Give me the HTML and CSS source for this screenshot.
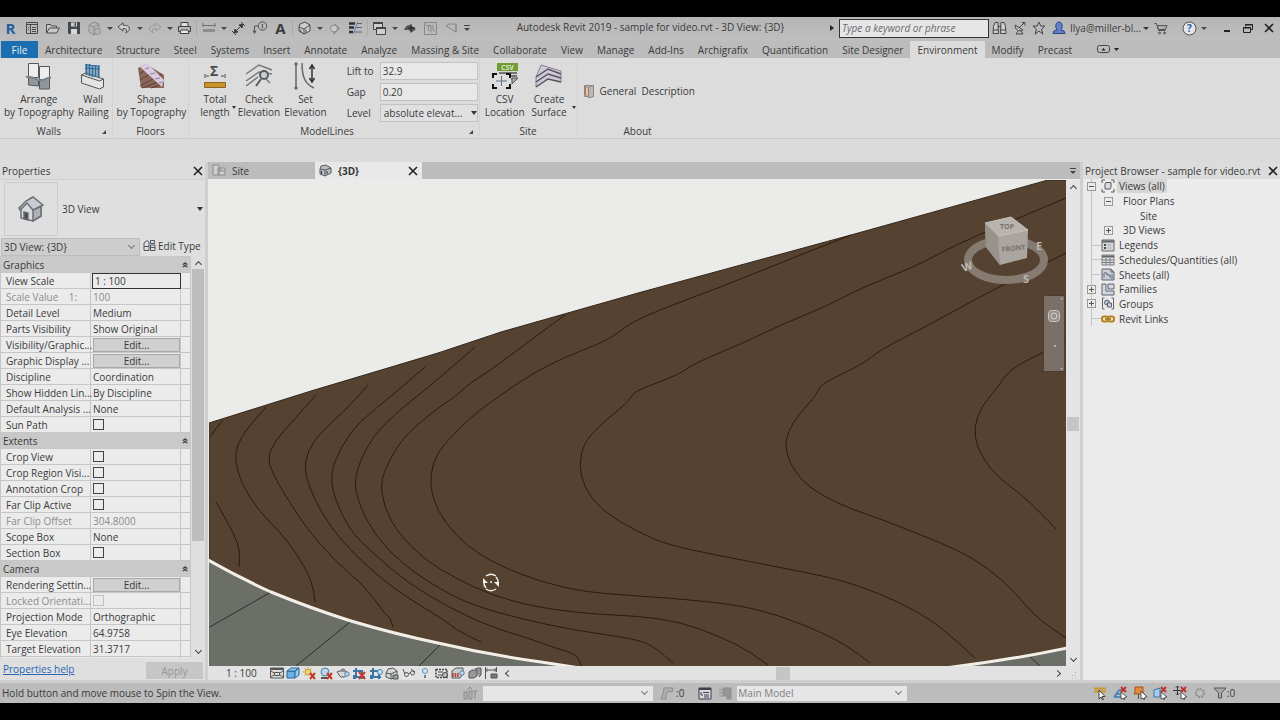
FILE: index.html
```html
<!DOCTYPE html>
<html lang="en">
<head>
  <meta charset="UTF-8" />
  <meta name="viewport" content="width=device-width, initial-scale=1.0"/>
  <title>Autodesk Revit 2019 - sample for video.rvt - 3D View: {3D}</title>
  <link rel="stylesheet" href="styles.css">
</head>
<body>
  <div class="app">

    <header class="titlebar">
      <div class="quick-access">
        <button class="qa logo-r" aria-label="Revit">R</button>
        <button class="qa" aria-label="Home"><svg width="14" height="14" viewBox="0 0 14 14" fill="none" stroke="#4a4a4a"><path d="M1.500 1.500h11v11h-11zM1.500 3.500h11M5.500 4v8M7 6.500h4M7 8.500h4M7 10.500h4M3 6.500h1M3 8.500h1"/></svg></button>
        <button class="qa" aria-label="Open"><svg width="15" height="14" viewBox="0 0 15 14" fill="#c9c9c9" stroke="#4a4a4a"><path d="M1.500 12V3.500h4l1 1.500h5v2"/><path d="M1.500 12l3-5h10l-3 5z"/></svg></button>
        <button class="qa" aria-label="Save"><svg width="14" height="14" viewBox="0 0 14 14"><path d="M1 1h12v12H2l-1-1z" fill="#45484c"/><path d="M4 1.500h6v4H4z" fill="#d0d0d0"/><path d="M4 8h6v5H4z" fill="#d8d8d8"/><path d="M7.500 2h1.500v3H7.500z" fill="#45484c"/></svg></button>
        <button class="qa" aria-label="Synchronize"><svg width="15" height="15" viewBox="0 0 15 15" fill="#b4b4b4" stroke="#8e8e8e"><path d="M2 4l5-3 5 2v7l-5 4-5-3z"/><path d="M2 4l5 2 5-3M7 6v8" fill="none"/><circle cx="10.500" cy="10.500" r="3"/></svg></button>
        <button class="qa-drop" aria-label="Synchronize options"></button>
        <button class="qa" aria-label="Undo"><svg width="15" height="12" viewBox="0 0 15 12" fill="#d2d2d2" stroke="#4a4a4a"><path d="M6 .8L1 5l5 4V6.500c4-.5 4 1.500 3 4.500 5-3 5-8-3-7.800z"/></svg></button>
        <button class="qa-drop" aria-label="Undo history"></button>
        <button class="qa" aria-label="Redo"><svg width="15" height="12" viewBox="0 0 15 12" fill="none" stroke="#979797"><path d="M9 .8L14 5 9 9V6.500c-4-.5-4 1.500-3 4.500-5-3-5-8 3-7.800z"/></svg></button>
        <button class="qa-drop" aria-label="Redo history"></button>
        <button class="qa" aria-label="Print"><svg width="15" height="14" viewBox="0 0 15 14" stroke="#3f3f3f"><path d="M4 6V1.500h7V6" fill="#e0e0e0"/><path d="M1.500 5.500h12v5h-12z" fill="#b9b9b9"/><path d="M4 9h7l1 3.500H3z" fill="#e8e8e8"/></svg></button>
        <span class="qa-sep"></span>
        <button class="qa" aria-label="Measure"><svg width="14" height="12" viewBox="0 0 14 12" stroke="#707070" fill="none"><path d="M1 3.500h12M1 1v4M13 1v4"/><path d="M1 8.500h12" stroke-width="3" stroke="#8d8d8d"/></svg></button>
        <button class="qa-drop" aria-label="Measure options"></button>
        <button class="qa" aria-label="Aligned dimension"><svg width="15" height="15" viewBox="0 0 15 15" stroke="#3f3f3f" fill="#3f3f3f"><path d="M3 12L12 3M1 10l4 4M10 1l4 4" fill="none"/><path d="M3 12l1-4 3 3zM12 3l-4 1 3 3z"/></svg></button>
        <button class="qa" aria-label="Tag by category"><svg width="16" height="14" viewBox="0 0 16 14" stroke="#555" fill="none"><circle cx="10.500" cy="5" r="4.200"/><path d="M6 5H2.500v6M1 9.500l1.500 3L4 9.500M9.500 4l1-1v4.500"/></svg></button>
        <button class="qa text-tool" aria-label="Text">A</button>
        <span class="qa-sep"></span>
        <button class="qa" aria-label="Default 3D view"><svg width="15" height="14" viewBox="0 0 15 14" stroke="#4a4a4a" fill="#cdcdcd"><path d="M2 6l1-3 5-2 5 3v6l-6 3-5-3z"/><path d="M2 6l5 2 6-4M7 8v5M9 8.500v3M3.800 8.500v2.500" fill="none"/></svg></button>
        <button class="qa-drop" aria-label="3D view options"></button>
        <button class="qa" aria-label="Section"><svg width="13" height="13" viewBox="0 0 13 13" stroke="#8a8a8a"><path d="M7 2l4.500 4.500L7 11z" fill="#8a8a8a"/><circle cx="6" cy="6.500" r="3.500" fill="#c9c9c9"/><path d="M6 10v3"/></svg></button>
        <button class="qa" aria-label="Thin lines"><svg width="15" height="14" viewBox="0 0 15 14" fill="none"><path d="M1 2.500h6M1 6.500h5M1 11h4" stroke="#303030" stroke-width="2.500"/><path d="M9 2.500h5M8 6.500h6M7 11h7" stroke="#666"/><path d="M9.500 1L5.500 13" stroke="#3d8bd0"/></svg></button>
        <span class="qa-sep"></span>
        <button class="qa" aria-label="Close hidden windows"><svg width="15" height="15" viewBox="0 0 15 15" fill="#cfcfcf" stroke="#444"><path d="M1.500 1.500h9v7h-9z"/><path d="M1.500 2h9" stroke-width="2"/><path d="M4.500 6.500h9v7h-9z"/><path d="M4.500 7h9" stroke-width="2"/></svg></button>
        <button class="qa-drop" aria-label="Window options"></button>
        <button class="qa" aria-label="Orbit"><svg width="14" height="12" viewBox="0 0 14 12"><path d="M1 8c2-5 5-6 8-4l4 3-5 4-2-3z" fill="#555"/><path d="M8 2v7M5 6h7" stroke="#222"/></svg></button>
        <button class="qa" aria-label="Levels"><svg width="13" height="13" viewBox="0 0 13 13" stroke="#888" fill="none"><path d="M.5.500h12v12H.5zM2 3.500h5v7M4.500 4v5M9 3v5l2 2"/></svg></button>
        <button class="qa" aria-label="Pick plane"><svg width="13" height="13" viewBox="0 0 13 13" stroke="#888" fill="none"><path d="M1 4l3-2h7v8zM11 2v8"/></svg></button>
        <button class="qa-drop qa-more" aria-label="Customize toolbar"></button>
      </div>

      <div class="window-title">Autodesk Revit 2019 - sample for video.rvt - 3D View: {3D}</div>

      <div class="infocenter">
        <span class="play-mark"></span>
        <input class="search" type="search" placeholder="Type a keyword or phrase" aria-label="Search help">
        <button class="qa" aria-label="Search"><svg width="15" height="14" viewBox="0 0 15 14" fill="#cfcfcf" stroke="#444"><path d="M3 1.500h3v4l.5 7H1l.5-7zM9 1.500h3l1.500 4 .5 7H8.500z"/><path d="M6 5.500h3M1.500 9h5M8.500 9H14" fill="none"/></svg></button>
        <button class="qa" aria-label="Communication center"><svg width="13" height="14" viewBox="0 0 13 14" fill="none" stroke="#444"><path d="M2 4c0 5 4 7 8 5zM6 7l5-5M9 1.500h3v3M5 10l-2 3h7l-2-3"/></svg></button>
        <button class="qa" aria-label="Favorites"><svg width="14" height="14" viewBox="0 0 14 14" fill="none" stroke="#444"><path d="M7 1l1.800 4H13l-3.400 3 1.200 5L7 10l-3.800 3 1.200-5L1 5h4.200z"/></svg></button>
        <button class="qa" aria-label="Account"><svg width="14" height="14" viewBox="0 0 14 14" fill="#5f7fc6" stroke="#2b437f"><path d="M1 12.500l1-2.500 3-1C3 6 3.500 1 7 1s4 5 2 8l3 1 1 2.500z"/></svg></button>
        <button class="account">Ilya@miller-bl...<i class="caret"></i></button>
        <button class="qa cart" aria-label="App store"><svg width="14" height="13" viewBox="0 0 14 13" fill="#aaa" stroke="#555"><path d="M.5 1.500h2l2 7h7M3.500 3.500h9.500l-1.500 4H4.500z"/><circle cx="5.500" cy="11" r="1"/><circle cx="10.500" cy="11" r="1"/></svg></button>
        <button class="qa" aria-label="Help"><svg width="15" height="15" viewBox="0 0 15 15"><circle cx="7.500" cy="7.500" r="6.500" fill="#e4e6ea" stroke="#555"/><text class="help-mark" x="5" y="11">?</text></svg></button>
        <button class="qa-drop" aria-label="Help options"></button>
        <div class="window-controls">
          <button aria-label="Minimize"><svg width="10" height="10" viewBox="0 0 10 10"><path d="M2 8h6" stroke="#222" stroke-width="2"/></svg></button>
          <button aria-label="Restore"><svg width="12" height="11" viewBox="0 0 12 11" fill="none" stroke="#222"><path d="M3.500 3.500v-2h7v5h-2M1.500 4.500h7v5h-7z"/><path d="M1 5h8M3 2h8"/></svg></button>
          <button aria-label="Close"><svg width="10" height="10" viewBox="0 0 10 10"><path d="M1 1l8 8M9 1L1 9" stroke="#222" stroke-width="1.600"/></svg></button>
        </div>
      </div>
    </header>

    <nav class="ribbon-tabs">
      <div class="tabs">
        <button class="tab file">File</button>
        <button class="tab">Architecture</button>
        <button class="tab">Structure</button>
        <button class="tab">Steel</button>
        <button class="tab">Systems</button>
        <button class="tab">Insert</button>
        <button class="tab">Annotate</button>
        <button class="tab">Analyze</button>
        <button class="tab">Massing &amp; Site</button>
        <button class="tab">Collaborate</button>
        <button class="tab">View</button>
        <button class="tab">Manage</button>
        <button class="tab">Add-Ins</button>
        <button class="tab">Archigrafix</button>
        <button class="tab">Quantification</button>
        <button class="tab">Site Designer</button>
        <button class="tab active">Environment</button>
        <button class="tab">Modify</button>
        <button class="tab">Precast</button>
      </div>
      <button class="ribbon-toggle" aria-label="Minimize ribbon"><svg width="24" height="9" viewBox="0 0 24 9"><rect x=".5" y=".5" width="12" height="7" rx="2" fill="none" stroke="#444"/><path d="M4.500 5.500l2-2.500 2 2.500zM17 3h5l-2.500 3z" fill="#222"/></svg></button>
    </nav>

    <section class="ribbon">
      <div class="panel walls">
        <div class="panel-body">
          <button class="tool">
            <svg width="28" height="28" viewBox="0 0 28 28" stroke="#55585c"><path d="M3.500 1.500h10v14h-10zM14.500 4.500h10v13h-10z" fill="#ededed"/><path d="M3.500 15l8 2 2 1v6l-10-1zM14.500 19c4-1 6-3 10-3v11h-10z" fill="#8e979d"/><path d="M1 15c8-2 10 5 17 3 4-1 5-3 8-2" fill="none" stroke="#7b858b" stroke-width="2"/></svg>
            <span>Arrange<br>by Topography</span>
          </button>
          <button class="tool">
            <svg width="28" height="28" viewBox="0 0 28 28" fill="none"><path d="M2.500 13l18 6 4-2v8l-4 2-18-6z" fill="#e4e4e4" stroke="#555"/><path d="M2.500 13l4-2 18 6" stroke="#555"/><path d="M7.500 2v11M10.500 2v12M13.500 3v12M16.500 3v12M19.500 4v12" stroke="#2f6d99" stroke-width="2"/><path d="M6 3l15 1M6 6l15 1" stroke="#2f6d99"/></svg>
            <span>Wall<br>Railing</span>
          </button>
        </div>
        <div class="panel-title"><span>Walls</span><button class="launcher" aria-label="Walls settings"></button></div>
      </div>

      <div class="panel">
        <div class="panel-body">
          <button class="tool">
            <svg width="28" height="28" viewBox="0 0 28 28"><path d="M1 6l8-4 18 11v13H4z" fill="#8a655a"/><path d="M3 24l22-12M3 18l14-8M5 26l22-8M14 26l13-4M2 12l10-6" stroke="#5d4038" fill="none"/><path d="M3 5l7-4 17 17-2 7z" fill="#d9cbe0"/><path d="M8 7l4-1M13 12l5-1M18 17l5-1M22 21l4-1" stroke="#8d7b96"/></svg>
            <span>Shape<br>by Topography</span>
          </button>
        </div>
        <div class="panel-title"><span>Floors</span></div>
      </div>

      <div class="panel model-lines">
        <div class="panel-body">
          <button class="tool">
            <svg width="28" height="28" viewBox="0 0 28 28"><text class="sigma" x="9" y="14">Σ</text><path d="M4 12v4M24 12v4M5 14h3M20 14h3" stroke="#4a4a4a"/><path d="M3.500 20.500h21v5h-21z" fill="#c8922c" stroke="#8f6718"/></svg>
            <span>Total<br>length</span>
          </button>
          <i class="caret tool-caret"></i>
          <button class="tool">
            <svg width="28" height="28" viewBox="0 0 28 28" fill="none" stroke="#75787b" stroke-width="1.500"><path d="M1 12L14 3l13 5M1 19l13-9 13 2M1 24l12-9"/><circle cx="19" cy="13" r="4" fill="#c9ced2" stroke="#585c60" stroke-width="2"/><path d="M16 17l-5 7" stroke="#585c60" stroke-width="2"/><path d="M21 17l4 4"/></svg>
            <span>Check<br>Elevation</span>
          </button>
          <button class="tool">
            <svg width="28" height="28" viewBox="0 0 28 28" fill="none" stroke="#65686b" stroke-width="1.500"><path d="M5 1v25M11 1c0 14 3 21 12 25"/><path d="M21 4v15" stroke="#333"/><path d="M18.500 7L21 3l2.500 4M18.500 16l2.500 4 2.500-4" stroke="#333"/><circle cx="5" cy="2" r="1"/><circle cx="5" cy="26" r="1"/></svg>
            <span>Set<br>Elevation</span>
          </button>
          <div class="fields">
            <label for="lift">Lift to</label>
            <input id="lift" type="text" value="32.9">
            <label for="gap">Gap</label>
            <input id="gap" type="text" value="0.20">
            <label for="level">Level</label>
            <div class="select">
              <select id="level"><option>absolute elevat...</option></select>
              <i class="caret"></i>
            </div>
          </div>
        </div>
        <div class="panel-title"><span>ModelLines</span><button class="launcher" aria-label="ModelLines settings"></button></div>
      </div>

      <div class="panel site">
        <div class="panel-body">
          <button class="tool">
            <svg width="28" height="28" viewBox="0 0 28 28" fill="none"><path d="M7 7h20v10l-6 6H7z" fill="#d7d7d7"/><path d="M6 1h21v8H6z" fill="#6f9c35"/><text class="csv-label" x="10" y="8">CSV</text><path d="M8 11h18M18 14h8M20 17h5" stroke="#555" stroke-width="1.500"/><path d="M27 16l-6 6v-6z" fill="#aaa" stroke="#555"/><path d="M1 13h19v13H1z" fill="#dedede"/><path d="M2 16v-4h4M15 12h4v4M2 22v4h4M15 26h4v-4" stroke="#111" stroke-width="2"/><path d="M5 19h11M10.500 14v10" stroke="#5f7188"/></svg>
            <span>CSV<br>Location</span>
          </button>
          <button class="tool">
            <svg width="28" height="28" viewBox="0 0 28 28" fill="none"><path d="M1 25V15L6 3l20 6v11l-13-3z" fill="#cfc8d8"/><path d="M1 25V15L6 3l20 6v11" stroke="#8d7f9d"/><path d="M1 15l12-8 13 5M1 20l12-8 13 4M1 25l12-8 13 3" stroke="#55525c" stroke-width="1.500"/></svg>
            <span>Create<br>Surface</span>
          </button>
          <i class="caret tool-caret"></i>
        </div>
        <div class="panel-title"><span>Site</span></div>
      </div>

      <div class="panel about">
        <div class="panel-body">
          <button class="inline-tool">
            <svg width="11" height="14" viewBox="0 0 11 14" fill="#dadada" stroke="#888"><path d="M.5 1.500h9v11h-9z"/><path d="M4.500 3l5-1.500v11L4.500 14z" fill="#b9b9b9"/><path d="M1.500 2v9l3 2V4z" fill="#e6c4bb" stroke="#b0705c"/></svg>
            <span>General&nbsp; Description</span>
          </button>
        </div>
        <div class="panel-title"><span>About</span></div>
      </div>
    </section>

    <main class="workspace">
      <aside class="properties">
        <div class="pane-head"><h2>Properties</h2><button class="close" aria-label="Close properties"><svg width="10" height="10" viewBox="0 0 10 10"><path d="M1 1l8 8M9 1L1 9" stroke="#222" stroke-width="1.600"/></svg></button></div>
        <div class="type-box">
          <div class="thumb"><svg width="28" height="28" viewBox="0 0 28 28" stroke="#6c7076" stroke-width="1.500"><path d="M4 14v9l12 3 8-5v-10L14 3z" fill="#d9dadc"/><path d="M16 15l8-4v10l-8 5z" fill="#aeb2b8"/><path d="M2 13L9 6l7-4 10 8-10 5-6-7-7 7z" fill="#c9ccd1"/><path d="M7 24v-7l4 1v7z" fill="#44484e"/></svg></div>
          <span>3D View</span>
          <i class="caret"></i>
        </div>
        <div class="filter-row">
          <div class="select">
            <select aria-label="Instance"><option>3D View: {3D}</option></select>
            <i class="chevron"></i>
          </div>
          <button class="edit-type"><svg width="13" height="13" viewBox="0 0 13 13" fill="none" stroke="#50565e"><path d="M1 4l3-2.500L6 3v8.500H1zM1 7.500h5M7.500 1.500h4v3h-4zM7.500 6h4.500v5.500H7.500zM8 8.500h4"/></svg>Edit Type</button>
        </div>
        <div class="props">
          <div class="props-clip">
            <table>
              <colgroup><col><col class="col-value"><col class="col-link"></colgroup>
              <tbody>
                <tr class="group"><th colspan="3">Graphics<i>»</i></th></tr>
                <tr><th>View Scale</th><td><input class="boxed" type="text" value="1 : 100" aria-label="View Scale"></td><td></td></tr>
                <tr class="off"><th>Scale Value&nbsp; &nbsp; 1:</th><td>100</td><td></td></tr>
                <tr><th>Detail Level</th><td>Medium</td><td></td></tr>
                <tr><th>Parts Visibility</th><td>Show Original</td><td></td></tr>
                <tr><th>Visibility/Graphic...</th><td><button>Edit...</button></td><td></td></tr>
                <tr><th>Graphic Display ...</th><td><button>Edit...</button></td><td></td></tr>
                <tr><th>Discipline</th><td>Coordination</td><td></td></tr>
                <tr><th>Show Hidden Lin...</th><td>By Discipline</td><td></td></tr>
                <tr><th>Default Analysis ...</th><td>None</td><td></td></tr>
                <tr><th><label for="sun">Sun Path</label></th><td><input id="sun" type="checkbox"></td><td></td></tr>
                <tr class="group"><th colspan="3">Extents<i>»</i></th></tr>
                <tr><th><label for="crop">Crop View</label></th><td><input id="crop" type="checkbox"></td><td></td></tr>
                <tr><th><label for="region">Crop Region Visi...</label></th><td><input id="region" type="checkbox"></td><td></td></tr>
                <tr><th><label for="annot">Annotation Crop</label></th><td><input id="annot" type="checkbox"></td><td></td></tr>
                <tr><th><label for="far">Far Clip Active</label></th><td><input id="far" type="checkbox"></td><td></td></tr>
                <tr class="off"><th>Far Clip Offset</th><td>304.8000</td><td></td></tr>
                <tr><th>Scope Box</th><td>None</td><td></td></tr>
                <tr><th><label for="section">Section Box</label></th><td><input id="section" type="checkbox"></td><td></td></tr>
                <tr class="group"><th colspan="3">Camera<i>»</i></th></tr>
                <tr><th>Rendering Settin...</th><td><button>Edit...</button></td><td></td></tr>
                <tr class="off"><th><label for="locked">Locked Orientati...</label></th><td><input id="locked" type="checkbox" disabled></td><td></td></tr>
                <tr><th>Projection Mode</th><td>Orthographic</td><td></td></tr>
                <tr><th>Eye Elevation</th><td>64.9758</td><td></td></tr>
                <tr><th>Target Elevation</th><td>31.3717</td><td></td></tr>
                <tr><th></th><td></td><td></td></tr>
              </tbody>
            </table>
          </div>
          <div class="vscroll">
            <i class="chevron up"></i>
            <div class="thumb-v"></div>
            <i class="chevron"></i>
          </div>
        </div>
        <div class="props-foot"><a href="#help">Properties help</a><button disabled>Apply</button></div>
      </aside>

      <section class="view">
        <div class="view-tabs">
          <button class="view-tab"><svg width="14" height="13" viewBox="0 0 14 13" fill="#cfcfcf" stroke="#8b8b8b"><path d="M1 1h6v10H1zM6 4h7v7H6zM8 4v3h5"/></svg><span>Site</span></button>
          <button class="view-tab active"><svg width="13" height="13" viewBox="0 0 13 13" fill="#b9bec5" stroke="#565b62"><path d="M1 5l1-3 5-1 5 3v5l-6 3-5-2z"/><path d="M1 5l5 1 6-2M6 6v6" fill="none"/><path d="M2.500 7v3M8 7v3" stroke="#333"/></svg><span>{3D}</span><svg class="tab-close" width="10" height="10" viewBox="0 0 10 10"><path d="M1 1l8 8M9 1L1 9" stroke="#222" stroke-width="1.600"/></svg></button>
          <button class="tab-list qa-more" aria-label="Open views"></button>
        </div>
        <div class="view-body">
          <svg class="canvas" viewBox="209 180 857 486" preserveAspectRatio="xMidYMid slice">
            <rect x="209" y="180" width="857" height="486" fill="#ebebea"/>
            <path d="M209 423L311 391 438 353 501 332 638 293 851 235 1048 180H1067V667H209z" fill="#554230" stroke="#33261b"/>
            <path d="M208 560Q238 577 271 592 310 608 351 621 395 634 438 643 490 655 541 662L580 668H208zM950 668Q1010 660 1067 648V668z" fill="#6c6f68"/>
            <path d="M208 628L271 592M296 666L350 622M419 666L440 645M1029 656L1041 667" stroke="#2c2f2b" fill="none"/>
            <g id="contours" fill="none" stroke="#2e1a0e" stroke-width="1"></g>
            <path d="M208 560Q238 577 271 592 310 608 351 621 395 634 438 643 490 655 541 662L580 668M945 668Q1010 660 1067 648" fill="none" stroke="#f3eee8" stroke-width="3"/>

            <!-- view cube -->
            <ellipse cx="1006" cy="260" rx="38" ry="20" fill="none" stroke="#857b71" stroke-width="8"/>
            <path d="M985 223l26-6 17 13-1 28-27 7-14-18z" fill="#aaa59f"/>
            <path d="M985 223l26-6 17 13-30 6z" fill="#b8b3ad" stroke="#c3beb8"/>
            <path d="M985 223l13 13 2 29-14-18z" fill="#98928b"/>
            <g class="cube-text">
              <text x="1000" y="229">TOP</text>
              <text x="1002" y="252" transform="rotate(-6 1002 252)">FRONT</text>
            </g>
            <g class="compass">
              <text x="963" y="271" transform="rotate(-20 966 270)">W</text>
              <text x="1023" y="283">S</text>
              <text x="1036" y="250">E</text>
            </g>

            <!-- navigation bar -->
            <rect x="1043.500" y="295.500" width="21" height="76" fill="#7b7067" stroke="#4b3d30"/>
            <rect x="1048.500" y="310.500" width="11" height="11" rx="3" fill="#98908a" stroke="#cdc8c3"/>
            <circle cx="1054" cy="316" r="3" fill="none" stroke="#d8d4d0"/>
            <circle cx="1055" cy="346" r="1" fill="#cdc8c3"/>
            <path d="M1060 298h3l-1 2zM1060 368h3l-1 2z" fill="#b5afa9"/>

            <!-- spin cursor -->
            <g fill="none" stroke="#f5f2ee" stroke-width="1.500">
              <path d="M486 576c3-2 7-2 10 0M486 589c3 2 7 2 10 0"/>
              <path d="M483 578v5h5zM499 587v-5h-5z" fill="#f5f2ee" stroke="none"/>
              <path d="M484 583c0 2 1 4 2 5M498 582c0-2-1-4-2-5"/>
              <circle cx="491" cy="582" r="1" fill="#f5f2ee" stroke="none"/>
            </g>
          </svg>
          <div class="vscroll view-vscroll">
            <i class="chevron up"></i>
            <div class="thumb-v"></div>
            <i class="chevron"></i>
          </div>
        </div>
        <div class="view-bar">
          <button class="scale">1 : 100</button>
          <div class="view-icons">
            <button aria-label="Detail level"><svg width="14" height="12" viewBox="0 0 14 12"><path d="M.5 1h13v10H.5z" fill="#ddd" stroke="#555"/><path d="M0 2h14" stroke="#555" stroke-width="2"/><path d="M4.500 5.500h5v3h-5zM1 10l3-2M13 10l-3-2M1 4l3 2M13 4l-3 2" fill="none" stroke="#555"/></svg></button>
            <button aria-label="Visual style"><svg width="14" height="12" viewBox="0 0 14 12" stroke="#23689c"><path d="M1 4h8v7H1z" fill="#6fb2e4"/><path d="M1 4l4-3h8L9 4zM9 4l4-3v7l-4 3z" fill="#9bccef"/></svg></button>
            <button aria-label="Sun path off"><svg width="14" height="13" viewBox="0 0 14 13"><circle cx="5" cy="5" r="3" fill="#f1d27a" stroke="#c8941d"/><path d="M5 0v1M0 5h1M1.500 1.500l1 1M8.500 1.500l-1 1M1.500 8.500l1-1" stroke="#c8941d"/><path d="M7 6l5 6M12 6l-5 6" stroke="#c43a26" stroke-width="2"/></svg></button>
            <button aria-label="Shadows off"><svg width="14" height="13" viewBox="0 0 14 13"><circle cx="6" cy="5" r="4" fill="#bcd6ea" stroke="#4a7ea6"/><path d="M2 11h6" stroke="#555" stroke-width="2"/><path d="M8 6l5 6M13 6l-5 6" stroke="#c43a26" stroke-width="2"/></svg></button>
            <button aria-label="Rendering dialog"><svg width="14" height="12" viewBox="0 0 14 12" fill="#d6d6d6" stroke="#555"><path d="M3 4h7c1 3 0 6-2 6H5C3 9 3 7 1 5l2-1zM5 3l2-1 2 1"/><circle cx="11" cy="7" r="2.200" fill="#bcd9ef" stroke="#4c7fa8"/></svg></button>
            <button aria-label="Crop view off"><svg width="14" height="13" viewBox="0 0 14 13" fill="none"><path d="M4 1v9h9M1 4h9v8" stroke="#3b76a5" stroke-width="2"/><path d="M1 8h3v4H1z" fill="#3b76a5"/><path d="M7 5l6 7M13 5l-6 7" stroke="#c43a26" stroke-width="2"/></svg></button>
            <button aria-label="Crop region"><svg width="14" height="13" viewBox="0 0 14 13" fill="none"><path d="M4 1v9h8M1 4h9v8" stroke="#3b76a5" stroke-width="2"/><path d="M1 8h3v4H1z" fill="#3b76a5"/><circle cx="11" cy="5" r="2.500" fill="#cfe2f2" stroke="#4c7fa8"/></svg></button>
            <button aria-label="Locked 3D view"><svg width="14" height="13" viewBox="0 0 14 13" fill="#d4d4d4" stroke="#555"><path d="M1 6l2-4 5-1 4 3v6l-6 2-5-2z"/><path d="M1 6l5 1 6-3M6 7v5" fill="none"/><path d="M8 8h5v4H8z" fill="#8fa69a"/></svg></button>
            <button aria-label="Temporary hide"><svg width="14" height="10" viewBox="0 0 14 10" fill="none" stroke="#555"><path d="M1 1l2 5M13 4l-4-3M6 6c1-1 1-1 2-1"/><circle cx="4.500" cy="6.500" r="2"/><circle cx="10.500" cy="5" r="2"/></svg></button>
            <button aria-label="Reveal hidden"><svg width="8" height="12" viewBox="0 0 8 12"><circle cx="4" cy="4" r="2.500" fill="#d5e6f5" stroke="#5b8cc0"/><path d="M3 8h2v3H3z" fill="#6d7f92"/></svg></button>
            <button aria-label="View properties"><svg width="14" height="12" viewBox="0 0 14 12" fill="none" stroke="#444"><path d="M1 2.500h11v8H1z" stroke-width="1.500" stroke-dasharray="2 1"/><path d="M3 5h5M3 8h4"/><circle cx="10" cy="8" r="2.500" fill="#bbb"/></svg></button>
            <button aria-label="Analytical model"><svg width="14" height="12" viewBox="0 0 14 12" stroke="#555" fill="#ccc"><path d="M1 4l4-3h7v6l-3 4H1z"/><path d="M2 6v4M4.500 6v4M7 6v4" stroke="#b0413a" stroke-width="1.500"/><circle cx="11" cy="6" r="2.200" fill="#c9def0" stroke="#4c7fa8"/></svg></button>
            <button aria-label="Displacement sets"><svg width="14" height="12" viewBox="0 0 14 12" stroke="#555" fill="#999"><path d="M1 5l3-2h5v6l-3 2H1zM7 2l3-1h3v7l-2 2"/></svg></button>
            <button aria-label="Constraints"><svg width="14" height="13" viewBox="0 0 14 13" fill="none" stroke="#555"><path d="M1.500 0v12M12.500 0v5M1 3h12M3.500 1.500L1.500 3l2 1.500M10.500 1.500l2 1.500-2 1.500"/><path d="M7 7h6v4H7z" fill="#777"/></svg></button>
          </div>
          <i class="chevron left"></i>
          <div class="hscroll"><div class="thumb-h"></div></div>
          <i class="chevron right"></i>
          <i class="grip"></i>
        </div>
      </section>

      <aside class="browser">
        <div class="pane-head"><h2>Project Browser - sample for video.rvt</h2><button class="close" aria-label="Close project browser"><svg width="10" height="10" viewBox="0 0 10 10"><path d="M1 1l8 8M9 1L1 9" stroke="#222" stroke-width="1.600"/></svg></button></div>
        <ul class="tree">
          <li><button class="toggle open" aria-label="Collapse"></button><svg width="14" height="14" viewBox="0 0 14 14" fill="none" stroke="#555a60"><path d="M1 4V1h3M10 1h3v3M1 10v3h3M10 13h3v-3"/><path d="M4 5l1-1.500h5v5L9 10H4z" fill="#d9dbde"/></svg><span class="selected">Views (all)</span></li>
          <li class="level-1"><button class="toggle open" aria-label="Collapse"></button><span>Floor Plans</span></li>
          <li class="level-2"><span>Site</span></li>
          <li class="level-1"><button class="toggle" aria-label="Expand"></button><span>3D Views</span></li>
          <li class="leaf"><svg width="14" height="13" viewBox="0 0 14 13"><path d="M1 1h12v11H1z" fill="#d5d5d8" stroke="#63676d"/><path d="M1 2.500h12" stroke="#63676d" stroke-width="2"/><path d="M3 6h2M3 9h2" stroke="#4a4e54" stroke-width="2"/><path d="M7 6h4M7 9h4" stroke="#888" stroke-dasharray="1 1"/></svg><span>Legends</span></li>
          <li class="leaf"><svg width="14" height="12" viewBox="0 0 14 12" fill="#dedee0" stroke="#7a7e84"><path d="M1 1h12v10H1z"/><path d="M1 2.500h12" stroke="#63676d" stroke-width="2"/><path d="M1 6h12M1 8.500h12M5 4v7M9 4v7"/></svg><span>Schedules/Quantities (all)</span></li>
          <li class="leaf"><svg width="14" height="13" viewBox="0 0 14 13" fill="#c9cdd6" stroke="#5e6470"><path d="M1 1h9l3 3v8H1z"/><path d="M3 9.500V5h3v2h3v3M10 1v3h3M11 6v5" fill="none"/></svg><span>Sheets (all)</span></li>
          <li><button class="toggle" aria-label="Expand"></button><svg width="14" height="13" viewBox="0 0 14 13" fill="#d3d6dc" stroke="#5e6470"><path d="M1 1h4v7h8v4H1zM7 1h6v5H7z"/></svg><span>Families</span></li>
          <li><button class="toggle" aria-label="Expand"></button><svg width="14" height="13" viewBox="0 0 14 13" fill="none" stroke="#5e6470"><path d="M3.500 1h-2v11h2M10.500 1h2v11h-2"/><circle cx="6" cy="5.500" r="2.500" fill="#b9bec8"/><path d="M6.500 6h4v4h-4z" fill="#c9cdd6"/></svg><span>Groups</span></li>
          <li class="leaf"><svg width="14" height="8" viewBox="0 0 14 8" fill="none" stroke="#b5831c" stroke-width="2"><rect x="1" y="1.500" width="6" height="5" rx="2"/><rect x="7" y="1.500" width="6" height="5" rx="2"/><path d="M4 4h6"/></svg><span>Revit Links</span></li>
        </ul>
      </aside>
    </main>

    <footer class="statusbar">
      <p class="hint">Hold button and move mouse to Spin the View.</p>
      <svg class="status-icon" width="15" height="14" viewBox="0 0 15 14" fill="#b0b0b0" stroke="#8b8b8b"><path d="M1 6h3v7H1zM6 5h3v8H6zM4 4l3-3 2 2M10 4l2 3 2-3M12 7v6"/></svg>
      <div class="select workset"><select aria-label="Active workset"><option></option></select><i class="chevron"></i></div>
      <svg class="status-icon editable" width="14" height="13" viewBox="0 0 14 13" fill="#b0b0b0" stroke="#8b8b8b"><path d="M4 1h9l-1 4-4-1-2 4v4H1l2-5z"/></svg>
      <span class="count">:0</span>
      <svg class="status-icon options" width="14" height="13" viewBox="0 0 14 13" fill="#d9dade" stroke="#3d3f4d"><path d="M1 1h12v11H1z"/><path d="M1 2h12" stroke-width="2"/><path d="M5 5.500h6M6 8h5M6 10h5M3 5v3h2"/></svg>
      <svg class="status-icon" width="14" height="13" viewBox="0 0 14 13" fill="#979797" stroke="#8b8b8b"><path d="M5 1h8v11H9V8H5z"/><path d="M1 3h3M1 6h3M1 9h7" /></svg>
      <div class="select model"><select aria-label="Design option"><option>Main Model</option></select><i class="chevron"></i></div>
      <div class="select-tools">
        <button aria-label="Select links"><svg width="14" height="14" viewBox="0 0 14 14"><path d="M1 2.500h12M1 5.500h12" stroke="#c9972b" stroke-width="2"/><path d="M6 4v9l2-2 1.500 3 1-.5L9 10.500h3z" fill="#fff" stroke="#444"/></svg></button>
        <button aria-label="Select underlay"><svg width="14" height="14" viewBox="0 0 14 14"><path d="M1 11l5-7h4M1 11h7M3 8h6" fill="none" stroke="#3d7fb8" stroke-width="1.500"/><path d="M8 1l5 5M13 1L8 6" stroke="#c2332f" stroke-width="2"/><path d="M8 6v7l2-1 1 2 1-3h2z" fill="#fff" stroke="#555"/></svg></button>
        <button aria-label="Select pinned"><svg width="14" height="14" viewBox="0 0 14 14"><path d="M2 1h8v5l1 2H1l1-2z" fill="#e08a3c" stroke="#a3551d"/><path d="M5.500 8v5" stroke="#555"/><path d="M8 5v8l2-1 1 2 1-3h2z" fill="#fff" stroke="#555"/></svg></button>
        <button aria-label="Select by face"><svg width="14" height="14" viewBox="0 0 14 14"><path d="M1 4l6-2v9H1z" fill="#a9cde8" stroke="#2f77ae"/><path d="M8 1l5 5M13 1L8 6" stroke="#c2332f" stroke-width="2"/><path d="M8 6v7l2-1 1 2 1-3h2z" fill="#fff" stroke="#555"/></svg></button>
        <button aria-label="Drag elements"><svg width="14" height="14" viewBox="0 0 14 14"><path d="M0 4.500h8M4.500 0v9M3 1.500L4.500 0 6 1.500M3 7.500L4.500 9 6 7.500" fill="none" stroke="#333"/><path d="M8 1l5 5M13 1L8 6" stroke="#c2332f" stroke-width="2"/><path d="M8 6v7l2-1 1 2 1-3h2z" fill="#fff" stroke="#555"/></svg></button>
        <button aria-label="Background processes"><svg width="12" height="12" viewBox="0 0 12 12"><circle cx="6" cy="6" r="4" fill="none" stroke="#8e8e8e" stroke-width="2" stroke-dasharray="2 1"/></svg></button>
        <button class="filter"><svg width="14" height="12" viewBox="0 0 14 12" fill="#a9a9a9" stroke="#555"><path d="M1 1h12L8.500 6v5h-3V6z"/></svg>:0</button>
      </div>
    </footer>

  </div>

  <script>
    // Contour lines of the terrain, each one a list of x,y points
    const contours = [
      "210,437 215,429 223,420",
      "216,502 228,523 238,543 240,557 239,567",
      "266,407 248,427 237,445 235,460 241,483 258,510 280,532 296,553 308,573 314,590 315,602",
      "316,395 291,423 275,441 267,459 276,480 290,503 308,530 336,562 361,583 375,600 385,614 390,617 393,627",
      "368,385 351,405 321,432 308,450 304,470 313,497 331,528 355,555 383,580 408,598 441,618 461,633 481,642",
      "425,367 395,393 358,423 341,447 330,474 335,500 351,532 375,555 408,583 448,607 491,627 528,638 555,648 570,652 579,658 581,666",
      "475,347 441,377 391,417 368,443 353,480 360,507 375,535 401,563 441,590 475,606 525,620 575,630 608,635 638,640 655,647 673,663",
      "565,315 528,342 491,370 471,382 455,397 435,410 408,433 395,450 380,480 384,507 398,533 425,560 455,578 491,595 535,607 591,614 638,616 681,622 721,637 751,652 768,665",
      "851,235 805,253 721,287 638,318 615,335 601,343 558,360 525,378 475,413 451,437 437,453 430,475 432,498 445,523 468,547 498,565 541,582 585,592 638,596 681,599 738,605 778,615 821,632 851,648 870,663",
      "1066,198 1021,217 955,245 915,267 865,286 825,307 785,323 741,344 695,363 678,375 638,390 632,395 628,402 598,427 584,443 579,465 584,487 601,510 638,532 668,545 721,556 778,567 838,579 878,593 915,610 945,630 975,658",
      "1066,253 998,287 925,327 880,350 863,364 823,383 818,390 815,397 798,415 788,432 785,447 790,463 801,480 821,495 851,509 878,518 921,535 958,550 988,568 1015,592 1038,620 1066,638",
      "1066,341 1041,353 1009,370 998,387 981,407 974,427 977,448 991,470 1008,485 1018,492 1038,510 1056,529"
    ];

    // Curve through the midpoints so the lines stay smooth
    function smoothPath(line) {
      const p = line.split(" ").map(pair => pair.split(",").map(Number));
      let d = "M" + p[0];
      for (let i = 1; i < p.length - 1; i++) {
        const end = i === p.length - 2
          ? p[i + 1]
          : [(p[i][0] + p[i + 1][0]) / 2, (p[i][1] + p[i + 1][1]) / 2];
        d += " Q" + p[i] + " " + end;
      }
      return d;
    }

    const group = document.getElementById("contours");
    contours.forEach(line => {
      const path = document.createElementNS("http://www.w3.org/2000/svg", "path");
      path.setAttribute("d", smoothPath(line));
      group.appendChild(path);
    });
  </script>

</body>
</html>
```
FILE: styles.css
```css
* {
  margin: 0;
  padding: 0;
  box-sizing: border-box;
}

body {
  font-family: "Open Sans", "Noto Sans", sans-serif;
  font-size: 10px;
  color: #3a3a3a;
  background: #000;
}

button, input, select {
  font: inherit;
  color: inherit;
  background: none;
  border: none;
  border-radius: 0;
}

svg {
  display: block;
  flex: none;
}

.app {
  display: flex;
  flex-direction: column;
  height: 100vh;
  padding: 17px 0;
}

/* Small arrows */
.caret {
  display: inline-block;
  flex: none;
  border: 3px solid transparent;
  border-top: 4px solid #333;
  border-bottom: none;
}

.chevron {
  flex: none;
  width: 5px;
  height: 5px;
  border: solid #444;
  border-width: 0 1px 1px 0;
  rotate: 45deg;
}

.chevron.up { rotate: 225deg; }
.chevron.left { rotate: 135deg; }
.chevron.right { rotate: -45deg; }

.select {
  display: flex;
  align-items: center;
  padding-right: 6px;
}

.select select {
  flex: 1;
  min-width: 0;
  appearance: none;
}

/* Title bar */
.titlebar {
  display: flex;
  align-items: center;
  height: 24px;
  padding-bottom: 2px;
  background: linear-gradient(#b6b6b6, #bebebe);
}

.quick-access, .infocenter {
  display: flex;
  align-items: center;
  height: 22px;
}

.qa {
  display: flex;
  align-items: center;
  justify-content: center;
  width: 21px;
  height: 20px;
}

.logo-r, .text-tool {
  font-size: 15px;
  font-weight: bold;
  line-height: 20px;
}

.logo-r { color: #245f9e; }

.help-mark {
  font-size: 10px;
  font-weight: bold;
  fill: #2c5ba8;
}

.infocenter .qa { width: 20px; }

.qa-drop {
  display: flex;
  align-items: center;
  justify-content: center;
  width: 9px;
  height: 20px;
}

.qa-drop::after, .qa-more::after {
  content: "";
  border: 3px solid transparent;
  border-top: 3px solid #444;
  border-bottom: none;
}

.qa-more::before {
  content: "";
  width: 6px;
  height: 1px;
  margin-bottom: 2px;
  background: #444;
}

.qa-more {
  display: flex;
  flex-direction: column;
  align-items: center;
  justify-content: center;
}

.qa-sep {
  width: 1px;
  height: 16px;
  margin: 0 1px;
  background: #a9a9a9;
}

.window-title {
  flex: 1;
  padding-bottom: 2px;
  text-align: center;
  white-space: nowrap;
}

.play-mark {
  margin-right: 5px;
  border: 3px solid transparent;
  border-left: 4px solid #222;
  border-right: none;
}

.search {
  width: 150px;
  height: 19px;
  padding: 0 2px;
  border: 1px solid #333;
  background: #e6e6e6;
  font-style: italic;
}

.search::placeholder { color: #6c6c6c; }

.account {
  display: flex;
  align-items: center;
  gap: 2px;
  min-width: 82px;
  padding-left: 1px;
  white-space: nowrap;
}

.account .caret { border-width: 3px 3px 0; }

.cart { margin-right: 8px; }

.window-controls {
  display: flex;
  margin: 0 1px 0 8px;
}

.window-controls button {
  display: flex;
  align-items: center;
  justify-content: center;
  width: 21px;
  height: 20px;
}

/* Ribbon */
.ribbon-tabs {
  display: flex;
  height: 17px;
  padding-left: 1px;
  background: #bcbcbc;
}

.tabs {
  display: flex;
  width: 1078px;
}

.tab {
  flex: 1 0 auto;
  padding: 1px 6px 0;
  line-height: 16px;
  white-space: nowrap;
}

.tab.file {
  flex: none;
  width: 37px;
  background: #1b6fb0;
  color: #e6eef5;
}

.tab.active { background: #dcdcdc; }

.ribbon-toggle {
  display: flex;
  align-items: center;
  padding-left: 18px;
}

.ribbon {
  display: flex;
  height: 104px;
  padding-bottom: 22px;
  background: linear-gradient(#dcdcdc 80px, #c9c9c9 80px, #c9c9c9 81px, #dbdbdb 81px);
}

.panel {
  display: flex;
  flex-direction: column;
  border-right: 1px solid #d2d2d2;
}

.panel-body {
  flex: 1;
  display: flex;
  align-items: flex-start;
  padding: 4px 1px 0 3px;
}

.panel-title {
  display: flex;
  height: 16px;
  line-height: 14px;
}

.panel-title span {
  flex: 1;
  text-align: center;
}

.launcher {
  position: relative;
  width: 14px;
}

.launcher::after {
  content: "";
  position: absolute;
  left: 4px;
  top: 6px;
  border: 2px solid #444;
  border-color: transparent #444 #444 transparent;
}

.tool {
  display: flex;
  flex-direction: column;
  align-items: center;
  gap: 3px;
  padding: 0 1px;
  line-height: 13px;
}

.tool-caret {
  align-self: center;
  margin-top: 28px;
  border-width: 3px 2px 0;
}

.walls .panel-body {
  gap: 2px;
  padding-right: 2px;
}

.model-lines .panel-body { padding-left: 9px; }
.model-lines .tool { padding: 0 2px; }
.site .tool { padding: 0 5px 0 2px; }

.sigma {
  font-size: 14px;
  font-weight: bold;
  fill: #4a4a4a;
}

.csv-label {
  font-size: 7px;
  font-weight: bold;
  fill: #dbe8c8;
}

.fields {
  display: grid;
  grid-template-columns: 33px 98px;
  grid-auto-rows: 18px;
  gap: 3px 0;
  align-items: center;
  margin-left: 18px;
}

.fields input, .fields .select {
  width: 100%;
  height: 18px;
  padding: 0 2px;
  border: 1px solid #c2c2c2;
  background: #e8e8e8;
}

.fields .select {
  padding-right: 0;
  padding-left: 3px;
  background: #e0e0e0;
}

.about {
  width: 120px;
  border-right: none;
}

.about .panel-body { align-items: center; }

.inline-tool {
  display: flex;
  align-items: center;
  gap: 5px;
  padding: 0 0 4px 3px;
  white-space: nowrap;
}

/* Workspace */
.workspace {
  flex: 1;
  display: grid;
  grid-template-columns: 205px 1fr 197px;
  gap: 3px;
  min-height: 0;
  padding-bottom: 3px;
  background: #cfcfcf;
}

.pane-head {
  display: flex;
  align-items: center;
  justify-content: space-between;
  height: 17px;
  padding: 0 2px;
  background: #dcdcdc;
}

.pane-head h2 {
  font-size: 10px;
  font-weight: normal;
  white-space: nowrap;
}

.properties {
  display: flex;
  flex-direction: column;
  min-height: 0;
  background: #dfdfdf;
}

.type-box {
  display: flex;
  align-items: center;
  height: 58px;
  padding: 1px 2px 1px 4px;
  border-top: 1px solid #d0d0d0;
}

.type-box span {
  flex: 1;
  padding-left: 4px;
}

.thumb {
  display: flex;
  align-items: center;
  justify-content: center;
  width: 54px;
  height: 54px;
  border: 1px solid #cdcdcd;
}

.filter-row {
  display: flex;
  height: 19px;
}

.filter-row .select {
  width: 139px;
  height: 18px;
  margin: 1px 0 0 1px;
  padding: 0 5px 0 2px;
  border: 1px solid #bcbcbc;
  background: #cdcdcd;
}

.filter-row .chevron, .statusbar .chevron {
  margin-bottom: 3px;
  border-color: #777;
}

.edit-type {
  display: flex;
  align-items: center;
  gap: 2px;
  padding: 0 0 2px 3px;
  white-space: nowrap;
}

.props {
  flex: 1;
  display: flex;
  min-height: 0;
}

.props-clip {
  flex: 1;
  overflow: hidden;
}

.props table {
  width: 100%;
  border-collapse: collapse;
  table-layout: fixed;
  background: #ebebeb;
}

.col-value { width: 90px; }
.col-link { width: 10px; }

.props th, .props td {
  height: 16px;
  border: 1px solid #c6c6c6;
  line-height: 14px;
  font-weight: normal;
  text-align: left;
  white-space: nowrap;
}

.props th { padding-left: 5px; }
.props td { padding-left: 2px; }
.props .off { color: #8b8b8b; }

.props .group th {
  padding: 0 3px 0 2px;
  background: #c9c9c9;
}

.group i {
  float: right;
  font-style: normal;
  font-weight: bold;
  rotate: -90deg;
}

.props td button {
  display: block;
  width: 87px;
  height: 14px;
  border: 1px solid #a9a9a9;
  background: #d0d0d0;
  line-height: 12px;
}

.props td .boxed {
  display: block;
  width: 87px;
  height: 14px;
  padding-left: 2px;
  outline: 1px solid #333;
}

.props input[type="checkbox"] {
  display: block;
  width: 11px;
  height: 11px;
  appearance: none;
  border: 1px solid #444;
}

.props input[type="checkbox"]:disabled { border-color: #c2c2c2; }

.vscroll {
  display: flex;
  flex-direction: column;
  align-items: center;
  justify-content: space-between;
  width: 14px;
  padding: 6px 0 5px;
  background: #dfdfdf;
}

.properties .thumb-v {
  flex: none;
  width: 12px;
  height: 272px;
  margin: 2px 0 auto;
  background: #bdbdbd;
}

.props-foot {
  display: flex;
  justify-content: space-between;
  height: 22px;
  padding: 4px 2px 1px 3px;
}

.props-foot a { color: #2765b5; }

.props-foot button {
  width: 57px;
  background: #c6c6c6;
  color: #969696;
}

/* View */
.view {
  display: flex;
  flex-direction: column;
  min-width: 0;
  min-height: 0;
}

.view-tabs {
  display: flex;
  height: 17px;
  background: #bcbcbc;
}

.view-tab {
  display: flex;
  align-items: center;
  gap: 6px;
  width: 107px;
  padding: 0 4px;
}

.view-tab.active {
  background: #e8e8e8;
  font-weight: bold;
}

.tab-close { margin-left: auto; }

.tab-list {
  width: 14px;
  margin-left: auto;
}

.view-body {
  flex: 1;
  display: flex;
  min-height: 0;
  padding: 1px 0 0 1px;
  background: #ebebea;
}

.canvas {
  flex: 1;
  min-width: 0;
  height: 100%;
}

.view-vscroll { background: #e4e4e4; }

.view-vscroll .thumb-v {
  width: 12px;
  height: 14px;
  background: #c5c5c5;
}

.cube-text {
  font-size: 7px;
  font-weight: bold;
  fill: #77716b;
}

.compass {
  font-size: 11px;
  font-weight: bold;
  fill: #bdb7b0;
}

.view-bar {
  display: flex;
  align-items: center;
  height: 14px;
  background: #e2e2e2;
}

.scale { padding: 0 12px 0 18px; }

.view-icons {
  display: grid;
  grid-template-columns: repeat(14, 1fr);
  width: 231px;
}

.view-icons button {
  display: flex;
  align-items: center;
  justify-content: center;
  height: 14px;
}

.hscroll {
  flex: 1;
  display: flex;
  justify-content: center;
  height: 13px;
}

.thumb-h {
  width: 14px;
  background: #c5c5c5;
}

.view-bar .left { margin-left: 6px; }

.grip {
  width: 8px;
  height: 8px;
  margin: 3px 4px 0 8px;
  background: radial-gradient(#aaa 1px, transparent 1px) 0 0 / 3px 3px;
  clip-path: polygon(100% 0, 100% 100%, 0 100%);
}

/* Project browser */
.browser { background: #ebebeb; }

.tree {
  display: grid;
  grid-template-rows: repeat(10, 1fr);
  height: 147px;
  margin-left: 8px;
  border-left: 1px solid #c4c4c4;
  list-style: none;
}

.tree li {
  display: flex;
  align-items: center;
  min-height: 0;
  line-height: 14px;
  white-space: nowrap;
}

.tree svg { margin: 0 2px 0 4px; }
.tree span { padding: 0 2px; }
.tree .selected { background: #d6d6d6; }
.tree .leaf { padding-left: 5px; }
.tree .level-1 { padding-left: 17px; }
.tree .level-2 { padding-left: 46px; }

.tree .leaf::before {
  content: "";
  width: 9px;
  height: 1px;
  margin-left: -5px;
  margin-right: -4px;
  background: #c4c4c4;
}

.toggle {
  flex: none;
  width: 9px;
  height: 9px;
  margin-left: -5px;
  margin-right: 1px;
  border: 1px solid #999;
  background:
    linear-gradient(#555, #555) center / 5px 1px no-repeat,
    linear-gradient(#555, #555) center / 1px 5px no-repeat,
    #ebebeb;
}

.toggle.open { background: linear-gradient(#555, #555) center / 5px 1px no-repeat #ebebeb; }

.level-1 .toggle { margin: 0 8px 0 -5px; }

/* Status bar */
.statusbar {
  display: flex;
  align-items: center;
  height: 20px;
  background: #bcbcbc;
}

.hint {
  width: 463px;
  padding-left: 2px;
}

.status-icon { margin-right: 5px; }

.statusbar .select {
  width: 170px;
  height: 15px;
  padding-left: 1px;
  background: #e6e6e6;
  color: #808080;
}

.statusbar .editable { margin: 0 2px 0 7px; }
.statusbar .options { margin: 0 6px 0 14px; }

.select-tools {
  display: flex;
  margin-left: auto;
  padding-right: 42px;
}

.select-tools button {
  display: flex;
  align-items: center;
  justify-content: center;
  width: 20px;
  height: 20px;
}

.select-tools .filter { width: 28px; }
```
